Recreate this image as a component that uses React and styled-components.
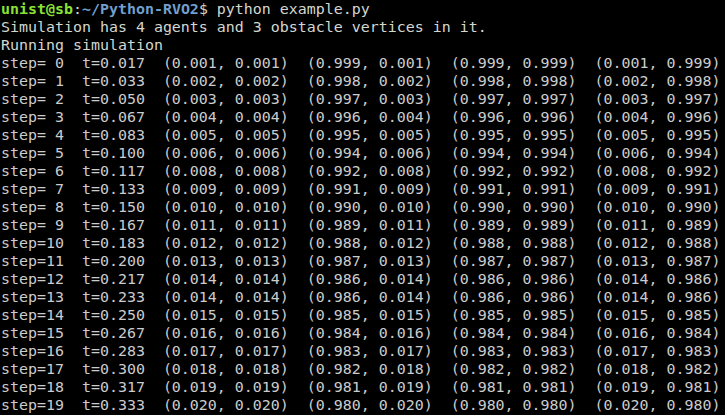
import React from "react"
import styled, { createGlobalStyle } from "styled-components"

const GlobalStyle = createGlobalStyle`
  html, body {
    margin: 0;
    padding: 0;
    background: #000;
  }
`;

const T = ["0.017","0.033","0.050","0.067","0.083","0.100","0.117","0.133","0.150","0.167",
  "0.183","0.200","0.217","0.233","0.250","0.267","0.283","0.300","0.317","0.333"];
const LOW = ["001","002","003","004","005","006","008","009","010","011",
  "012","013","014","014","015","016","017","018","019","020"];
const HIGH = ["999","998","997","996","995","994","992","991","990","989",
  "988","987","986","986","985","984","983","982","981","980"];

const stepLine = (i) => {
  const a = "0." + LOW[i];
  const b = "0." + HIGH[i];
  return `step=${String(i).padStart(2)}  t=${T[i]}  (${a}, ${a})  (${b}, ${a})  (${b}, ${b})  (${a}, ${b})`;
};

export default function App() {
  return (
    <>
      <GlobalStyle />
      <Terminal>
        <Line>
          <User>unist@sb</User>:<Path>~/Python-RVO2</Path>$ python example.py
        </Line>
        <Line>Simulation has 4 agents and 3 obstacle vertices in it.</Line>
        <Line>Running simulation</Line>
        {T.map((_, i) => (
          <Line key={i} output>{stepLine(i)}</Line>
        ))}
      </Terminal>
    </>
  )
}

const Terminal = styled.div`
  width: 725px;
  height: 415px;
  box-sizing: border-box;
  padding: 0 0 0 1px;
  background: #000;
  overflow: hidden;
  font-family: "DejaVu Sans Mono", "Liberation Mono", monospace;
  font-size: 14.95px;
  line-height: 18px;
  color: #d3d7cf;
`;
const Line = styled.div`
  white-space: pre;
  height: 18px;
  color: ${props => props.output ? "#cccccc" : "#d3d7cf"};
`;
const User = styled.span`
  color: #8ae234;
  font-weight: 700;
`;
const Path = styled.span`
  color: #729fcf;
  font-weight: 700;
`;
